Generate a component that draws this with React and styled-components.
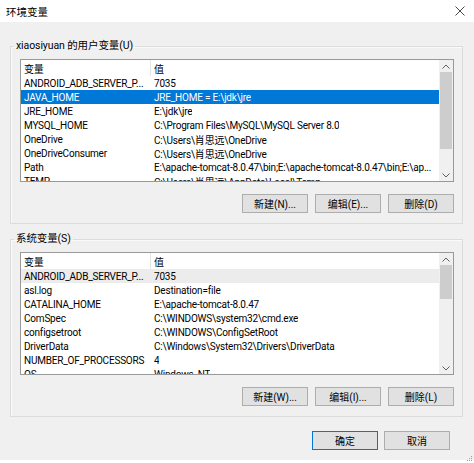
import React from "react";
import styled, { createGlobalStyle } from "styled-components";

const GlobalStyle = createGlobalStyle`
  html, body {
    margin: 0;
    padding: 0;
  }
  body {
    background: #ffffff;
    font-family: Roboto, "Noto Sans CJK SC", sans-serif;
    font-size: 10px;
    letter-spacing: -0.2px;
    color: #000;
  }
`;

const userVars = [
  ["ANDROID_ADB_SERVER_P...", "7035"],
  ["JAVA_HOME", "JRE_HOME = E:\\jdk\\jre", "selected"],
  ["JRE_HOME", "E:\\jdk\\jre"],
  ["MYSQL_HOME", "C:\\Program Files\\MySQL\\MySQL Server 8.0"],
  ["OneDrive", "C:\\Users\\肖思远\\OneDrive"],
  ["OneDriveConsumer", "C:\\Users\\肖思远\\OneDrive"],
  ["Path", "E:\\apache-tomcat-8.0.47\\bin;E:\\apache-tomcat-8.0.47\\bin;E:\\ap..."],
  ["TEMP", "C:\\Users\\肖思远\\AppData\\Local\\Temp"],
];

const systemVars = [
  ["ANDROID_ADB_SERVER_P...", "7035", "hover"],
  ["asl.log", "Destination=file"],
  ["CATALINA_HOME", "E:\\apache-tomcat-8.0.47"],
  ["ComSpec", "C:\\WINDOWS\\system32\\cmd.exe"],
  ["configsetroot", "C:\\WINDOWS\\ConfigSetRoot"],
  ["DriverData", "C:\\Windows\\System32\\Drivers\\DriverData"],
  ["NUMBER_OF_PROCESSORS", "4"],
  ["OS", "Windows_NT"],
];

function Chevron({ down }) {
  return (
    <svg width="8" height="5" viewBox="0 0 8 5">
      <polyline
        points={down ? "0.5,0.5 4,4 7.5,0.5" : "0.5,4.5 4,1 7.5,4.5"}
        fill="none"
        stroke="#606060"
        strokeWidth="1"
      />
    </svg>
  );
}

function VarList({ rows, thumbHeight }) {
  return (
    <ListBox>
      <Table>
        <HeaderRow>
          <HeaderCell first>变量</HeaderCell>
          <HeaderCell>值</HeaderCell>
        </HeaderRow>
        {rows.map(([name, value, state]) => (
          <Row key={name} state={state}>
            <NameCell>{name}</NameCell>
            <ValueCell>{value}</ValueCell>
          </Row>
        ))}
      </Table>
      <ScrollBar>
        <ArrowBox>
          <Chevron />
        </ArrowBox>
        <Track>
          <Thumb style={{ height: thumbHeight }} />
        </Track>
        <ArrowBox>
          <Chevron down />
        </ArrowBox>
      </ScrollBar>
    </ListBox>
  );
}

function App() {
  return (
    <>
      <GlobalStyle />
      <Window>
        <TitleBar>
          <span>环境变量</span>
          <svg width="10" height="10" viewBox="0 0 10 10">
            <path d="M0.5 0.5 L9.5 9.5 M9.5 0.5 L0.5 9.5" stroke="#333" strokeWidth="0.9" />
          </svg>
        </TitleBar>
        <Body>
          <Group>
            <Legend>xiaosiyuan 的用户变量(U)</Legend>
            <VarList rows={userVars} thumbHeight={77} />
            <ButtonRow>
              <Button>新建(N)...</Button>
              <Button>编辑(E)...</Button>
              <Button>删除(D)</Button>
            </ButtonRow>
          </Group>
          <Group second>
            <Legend>系统变量(S)</Legend>
            <VarList rows={systemVars} thumbHeight={34} />
            <ButtonRow>
              <Button>新建(W)...</Button>
              <Button>编辑(I)...</Button>
              <Button>删除(L)</Button>
            </ButtonRow>
          </Group>
          <DialogButtons>
            <Button primary>确定</Button>
            <Button>取消</Button>
          </DialogButtons>
        </Body>
        <Grip width="7" height="7" viewBox="0 0 7 7">
          <rect x="5" y="1" width="1" height="1" fill="#9a9a9a" />
          <rect x="3" y="3" width="1" height="1" fill="#9a9a9a" />
          <rect x="5" y="3" width="1" height="1" fill="#9a9a9a" />
          <rect x="1" y="5" width="1" height="1" fill="#9a9a9a" />
          <rect x="3" y="5" width="1" height="1" fill="#9a9a9a" />
          <rect x="5" y="5" width="1" height="1" fill="#9a9a9a" />
        </Grip>
      </Window>
    </>
  );
}

export default App;

const Window = styled.div`
  position: relative;
  width: 474px;
  height: 463px;
  background: #ffffff;
  display: flex;
  flex-direction: column;
  overflow: hidden;
`;

const TitleBar = styled.div`
  height: 22px;
  flex: none;
  display: flex;
  align-items: center;
  justify-content: space-between;
  padding: 0 9px 0 6px;
  font-size: 10.5px;
  letter-spacing: 0;
  background: #ffffff;
`;

const Body = styled.div`
  height: 438px;
  box-sizing: border-box;
  background: #f0f0f0;
  padding: 17px 11px 0 10px;
  display: flex;
  flex-direction: column;
`;

const Group = styled.fieldset`
  margin: ${({ second }) => (second ? "8px 0 0" : "0")};
  padding: 6px 8px 10px 9px;
  border: 1px solid #dcdcdc;
  box-shadow: inset 1px 1px 0 #fafafa;
  min-width: 0;
`;

const Legend = styled.legend`
  margin-left: -6px;
  padding: 0 2px;
  font-size: 10.5px;
  line-height: 14px;
  letter-spacing: -0.1px;
`;

const ListBox = styled.div`
  height: 123px;
  box-sizing: border-box;
  border: 1px solid #999999;
  background: #ffffff;
  display: flex;
`;

const Table = styled.div`
  flex: 1;
  min-width: 0;
  overflow: hidden;
`;

const HeaderRow = styled.div`
  height: 16px;
  display: flex;
  align-items: center;
`;

const HeaderCell = styled.div`
  box-sizing: border-box;
  height: 100%;
  display: flex;
  align-items: center;
  padding-left: 3px;
  width: ${({ first }) => (first ? "130px" : "auto")};
  border-right: ${({ first }) => (first ? "1px solid #e5e5e5" : "none")};
`;

const Row = styled.div`
  height: 14px;
  display: flex;
  align-items: center;
  white-space: nowrap;
  background: ${({ state }) =>
    state === "selected" ? "#0078d7" : state === "hover" ? "#ececec" : "transparent"};
  color: ${({ state }) => (state === "selected" ? "#ffffff" : "#000000")};
`;

const NameCell = styled.div`
  width: 130px;
  flex: none;
  box-sizing: border-box;
  padding-left: 3px;
  overflow: hidden;
`;

const ValueCell = styled.div`
  padding-left: 3px;
  overflow: hidden;
`;

const ScrollBar = styled.div`
  width: 14px;
  flex: none;
  background: #f0f0f0;
  display: flex;
  flex-direction: column;
`;

const ArrowBox = styled.div`
  height: 12px;
  flex: none;
  display: flex;
  align-items: center;
  justify-content: center;
`;

const Track = styled.div`
  flex: 1;
  padding: 0 1px;
`;

const Thumb = styled.div`
  background: #cdcdcd;
`;

const ButtonRow = styled.div`
  display: flex;
  justify-content: flex-end;
  gap: 7px;
  margin-top: 12px;
`;

const Button = styled.button`
  width: 66px;
  height: 19px;
  padding: 0;
  box-sizing: border-box;
  background: #e1e1e1;
  border: 1px solid ${({ primary }) => (primary ? "#0078d7" : "#adadad")};
  font-family: Roboto, "Noto Sans CJK SC", sans-serif;
  font-size: 10px;
  color: #000;
`;

const DialogButtons = styled.div`
  display: flex;
  justify-content: flex-end;
  gap: 6px;
  margin-top: 14px;
  padding-right: 13px;
`;

const Grip = styled.svg`
  position: absolute;
  right: 1px;
  bottom: 1px;
`;
